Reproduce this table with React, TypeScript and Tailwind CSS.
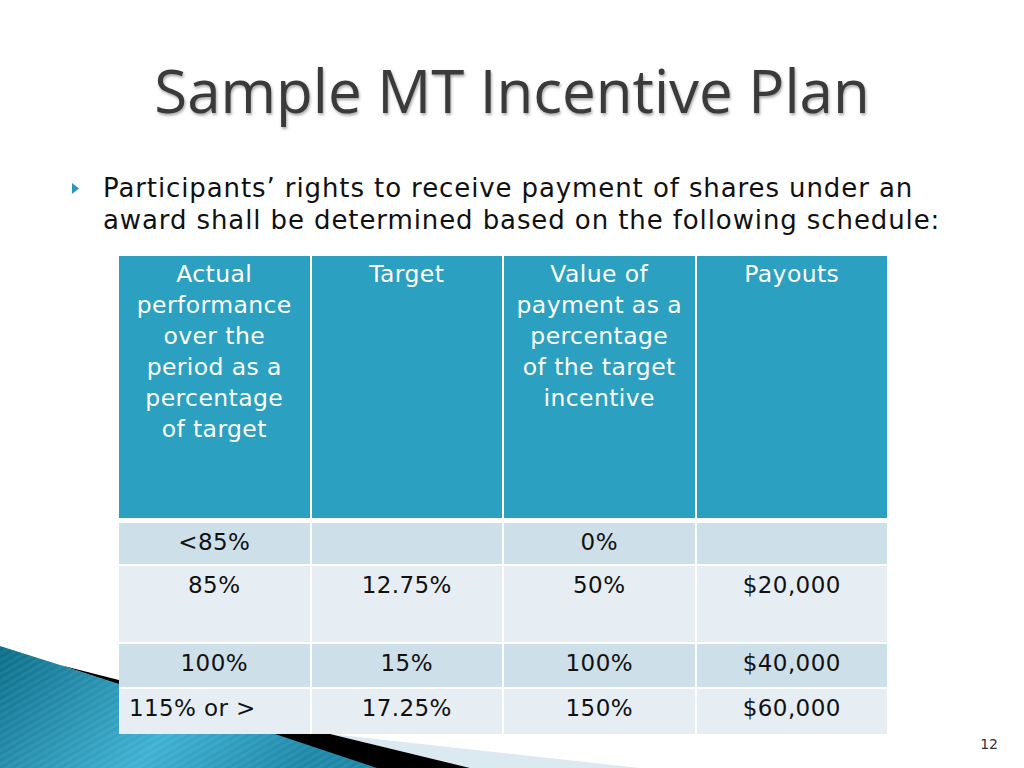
const rows = [
  { cells: ['<85%', '', '0%', ''], h: 'h-[41px]', bg: 'bg-[#cddfe9]' },
  { cells: ['85%', '12.75%', '50%', '$20,000'], h: 'h-[76px]', bg: 'bg-[#e6eef4]' },
  { cells: ['100%', '15%', '100%', '$40,000'], h: 'h-[43px]', bg: 'bg-[#cddfe9]' },
  { cells: ['115% or >', '17.25%', '150%', '$60,000'], h: 'h-[45px]', bg: 'bg-[#e6eef4]' },
];

const headers = [
  'Actual performance over the period as a percentage of target',
  'Target',
  'Value of payment as a percentage of the target incentive',
  'Payouts',
];

function Swoosh() {
  return (
    <svg className="absolute left-0 bottom-0" width="640" height="130" viewBox="0 0 640 130">
      <defs>
        <linearGradient id="teal" x1="0" y1="0" x2="1" y2="0.3">
          <stop offset="0" stopColor="#0b6d88" />
          <stop offset="0.6" stopColor="#3fb0d2" />
          <stop offset="1" stopColor="#1d87a8" />
        </linearGradient>
        <pattern id="stripes" width="6" height="6" patternUnits="userSpaceOnUse" patternTransform="rotate(60)">
          <rect width="3" height="6" fill="#ffffff" opacity="0.06" />
        </pattern>
      </defs>
      <polygon points="330,96 640,130 470,130" fill="#dbe9f0" />
      <polygon points="60,27 330,96 470,130 370,130" fill="#000000" />
      <polygon points="0,8 60,27 275,96 377,130 0,130" fill="url(#teal)" />
      <polygon points="0,8 60,27 275,96 377,130 0,130" fill="url(#stripes)" />
    </svg>
  );
}

export default function App() {
  return (
    <div className="relative w-[1024px] h-[768px] overflow-hidden bg-white font-['DejaVu_Sans',sans-serif]">
      <Swoosh />
      <div className="relative flex flex-col">
        <h1 className="pt-[60px] text-center text-[60px] leading-none text-[#3a3a3a] font-['Open_Sans',sans-serif] [text-shadow:1px_2px_3px_rgba(0,0,0,0.35)]">
          Sample MT Incentive Plan
        </h1>

        <div className="mt-[52px] flex pl-[72px]">
          <svg className="mt-[11px] shrink-0" width="8" height="11" viewBox="0 0 8 11">
            <polygon points="0,0 7,5.5 0,11" fill="#2a97ba" />
          </svg>
          <p className="ml-[23px] w-[880px] text-[26px] leading-[32px] tracking-[0.9px] text-[#111]">
            Participants’ rights to receive payment of shares under an award shall be determined based on the following schedule:
          </p>
        </div>

        <div className="ml-[119px] mt-[20px] w-[768px] bg-white">
          <div className="grid grid-cols-4 gap-x-[2px]">
            {headers.map((h) => (
              <div key={h} className="h-[262px] bg-[#2ca0c0] px-[12px] pt-[3px] text-center text-[23.5px] leading-[31px] tracking-[0.4px] text-white">
                {h}
              </div>
            ))}
          </div>
          <div className="mt-[5px] flex flex-col gap-y-[2px]">
            {rows.map((r, i) => (
              <div key={i} className="grid grid-cols-4 gap-x-[2px]">
                {r.cells.map((c, j) => (
                  <div
                    key={j}
                    className={`${r.h} ${r.bg} pt-[4px] text-[23px] leading-[31px] tracking-[0.4px] text-[#111] ${c.startsWith('115') ? 'pl-[10px] text-left' : 'text-center'}`}
                  >
                    {c}
                  </div>
                ))}
              </div>
            ))}
          </div>
        </div>

        <div className="flex justify-end pr-[26px] text-[14px] leading-[20px] text-[#333]">12</div>
      </div>
    </div>
  );
}
